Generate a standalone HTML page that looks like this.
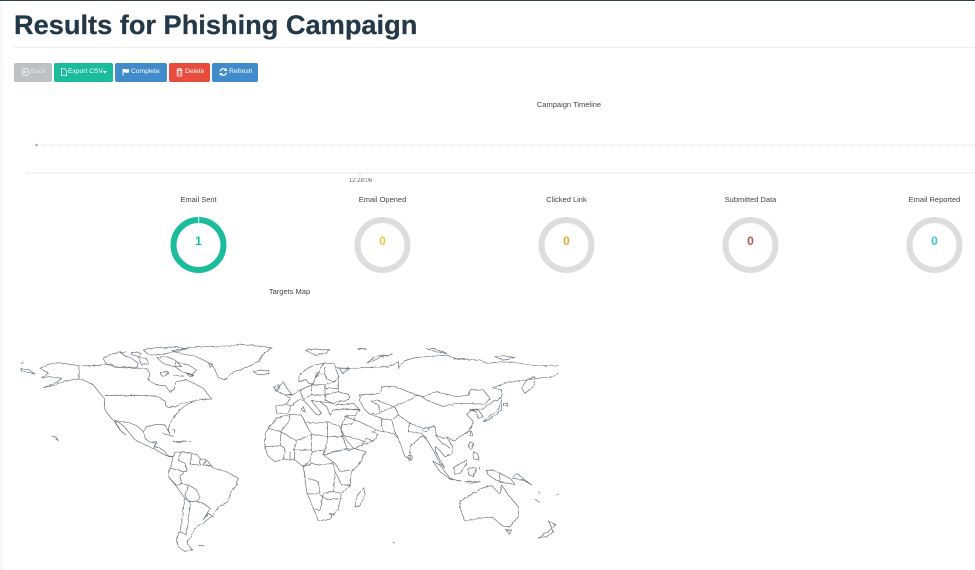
<!DOCTYPE html>
<html><head><meta charset="utf-8">
<style>
html,body{margin:0;padding:0;background:#fff}
body{width:975px;height:570px;position:relative;overflow:hidden;font-family:"Liberation Sans",sans-serif;color:#333}
.bar{position:absolute;left:0;top:0;width:975px;height:1px;background:#2c3e50}
.edge{position:absolute;left:0;top:1px;width:3px;height:569px;background:#f8f8f8}
h1{position:absolute;left:14px;top:8px;margin:0;font-size:27.2px;line-height:34px;font-weight:700;color:#233848;white-space:nowrap;-webkit-text-stroke:.25px #233848;filter:blur(.3px)}
.hr{position:absolute;left:14px;top:47px;width:961px;height:1px;background:#eee}
.btn{position:absolute;top:63px;height:19px;border-radius:2px}
.bt{position:absolute;top:67px;font-size:6.7px;line-height:10px;color:#fff;white-space:nowrap;filter:blur(.25px)}
.t{position:absolute;font-size:7.5px;line-height:10px;color:#444;text-align:center;transform:translateX(-50%);white-space:nowrap;filter:blur(.3px)}
.n{position:absolute;font-size:12px;line-height:14px;font-weight:700;transform:translateX(-50%);top:234px;filter:blur(.3px)}
svg.full{position:absolute;left:0;top:0}
</style></head><body>
<div class="edge"></div><div class="bar"></div>
<h1>Results for Phishing Campaign</h1>
<div class="hr"></div>
<div class="btn" style="left:14px;width:38px;background:#bcc1c4"></div>
<div class="btn" style="left:54px;width:59px;background:#1abc9c"></div>
<div class="btn" style="left:115px;width:52px;background:#428bca"></div>
<div class="btn" style="left:169px;width:41px;background:#e74c3c"></div>
<div class="btn" style="left:212px;width:46px;background:#428bca"></div>
<div class="bt" style="left:31px;color:#e4e6e8">Back</div>
<div class="bt" style="left:68px">Export CSV</div>
<div class="bt" style="left:131px">Complete</div>
<div class="bt" style="left:185px">Delete</div>
<div class="bt" style="left:229px">Refresh</div>

<div class="t" style="left:569px;top:100px">Campaign Timeline</div>
<div class="t" style="left:360.5px;top:176px;font-size:6px;color:#666">12:28:06</div>
<div class="t" style="left:198.5px;top:195px">Email Sent</div>
<div class="t" style="left:382.5px;top:195px">Email Opened</div>
<div class="t" style="left:566.5px;top:195px">Clicked Link</div>
<div class="t" style="left:750.5px;top:195px">Submitted Data</div>
<div class="t" style="left:934.5px;top:195px">Email Reported</div>
<div class="t" style="left:289.5px;top:287px">Targets Map</div>
<div class="n" style="left:198.5px;color:#1abc9c">1</div>
<div class="n" style="left:382.5px;color:#e9c545">0</div>
<div class="n" style="left:566.5px;color:#dfae35">0</div>
<div class="n" style="left:750.5px;color:#b5544c">0</div>
<div class="n" style="left:934.5px;color:#45c0d4">0</div>

<svg class="full" width="975" height="570" viewBox="0 0 975 570">
<defs>
<filter id="w" filterUnits="userSpaceOnUse" x="0" y="320" width="600" height="250">
<feTurbulence type="fractalNoise" baseFrequency=".28" numOctaves="2" seed="4" result="n"/>
<feDisplacementMap in="SourceGraphic" in2="n" scale="2.2" result="d"/>
<feGaussianBlur in="d" stdDeviation=".22"/>
</filter>
</defs>
<!-- button icons -->
<g fill="none" stroke="#fff" stroke-width="1">
<circle cx="25.5" cy="72" r="3.6" stroke="#e8eaeb" stroke-width="1.1"/>
<path d="M27.5 72H24M25.2 70.6L23.7 72 25.2 73.4" stroke="#e8eaeb" stroke-width=".8"/>
<path d="M61.5 68.5H64.5L66.5 70.5V75.5H61.5Z" stroke-width=".8"/>
<path d="M123 69V75.5" /><path d="M123 69.2C125 68.3 126 70 129 69V72.5C126 73.5 125 71.8 123 72.7Z" fill="#fff" stroke="none"/>
<path d="M176.5 70H182.5M178 70V68.6H181V70M177.2 70.5H181.8V76H177.2Z" stroke-width=".8"/>
<path d="M178.7 71.5V75M180.3 71.5V75" stroke-width=".5"/>
<path d="M220 71.3A3.5 3.5 0 0 1 226 70M226.5 72.7A3.5 3.5 0 0 1 220.5 74" stroke-width="1.2"/>
</g>
<path d="M226.8 68V71H223.8ZM219.7 76V73H222.7Z" fill="#fff"/>
<path d="M102.5 71H107L104.7 73.5Z" fill="#fff"/>

<line x1="36" y1="145" x2="975" y2="145" stroke="#d4d4d4" stroke-width="1" stroke-dasharray="1 1"/>
<circle cx="36.5" cy="145" r="1.4" fill="#b0b0b0"/>
<line x1="26" y1="173" x2="975" y2="173" stroke="#e8e8e8"/>
<line x1="360" y1="173" x2="360" y2="177" stroke="#e2e2e2"/>
<circle cx="198.5" cy="245" r="25" fill="none" stroke="#1abc9c" stroke-width="6"/>
<rect x="198.2" y="216" width="1" height="7" fill="#d8f3ec"/>
<g fill="none" stroke="#ddd" stroke-width="6">
<circle cx="382.5" cy="245" r="25"/><circle cx="566.5" cy="245" r="25"/><circle cx="750.5" cy="245" r="25"/><circle cx="934.5" cy="245" r="25"/>
</g>

<g filter="url(#w)" fill="none" stroke="#67747e" stroke-linejoin="round">
<g transform="translate(0,335) scale(.3333)" stroke-width="2.1">
<!-- North America -->
<path d="M120 100L145 88 175 83 237 92 270 93 300 90 335 87 345 97 400 100 440 100 450 115 445 135 470 150 497 152 510 172 525 160 527 140 560 135 590 150 610 160 625 180 635 192 590 195 560 210 540 222 527 240 510 265 505 285 510 298 495 270 470 268 440 275 430 290 435 310 450 322 470 320 465 335 480 340 495 350 505 365 520 365 500 362 480 352 460 340 440 332 405 315 385 290 370 272 345 255 350 268 365 290 378 300 360 285 345 262 330 245 315 225 313 190 300 175 280 150 250 135 237 132 190 140 165 150 130 158 170 142 185 130 150 125 125 128 145 115Z"/>
<path d="M237 92V132M315 182H445L475 185 497 200 500 216 525 215 550 205 575 200M345 258L385 262 410 272 430 290M455 325L470 320M460 340L472 325"/>
<path d="M63 85H73M63 100L85 103 105 117 85 112 63 108ZM155 303L170 307 175 317 165 310M490 295L520 305 505 300ZM516 284H524V295M520 320L560 318 535 322ZM568 320H575M595 632H612"/>
<!-- Arctic -->
<path d="M310 72L330 58 360 52 375 62 395 70 415 85 410 98 380 96 345 95 320 88ZM362 52H380M395 50L425 55 420 65 395 60ZM415 68L440 70 445 85 425 90ZM430 45L465 38 530 36 560 42 515 52 480 60 445 58ZM470 68L500 65 525 75 545 95 520 95 490 85ZM530 80L565 90 590 105 575 120 545 110 525 95ZM480 112L505 110 500 122 485 122ZM520 122H550M560 115L580 120 570 125Z"/>
<!-- Greenland, Iceland -->
<path d="M515 47L590 35 660 35 730 28 815 38 785 60 778 80 755 90 735 100 700 110 675 133 655 128 640 95 630 85 590 65 540 55ZM625 85L640 90 630 97ZM760 110L780 105 808 108 805 116 775 120Z"/>
<!-- South America -->
<path d="M520 365L525 352 545 350 590 358 600 370 620 375 640 400 680 410 715 430 710 450 690 475 685 500 655 515 640 540 615 560 590 575 575 600 560 625 578 645 555 650 535 635 530 610 540 590 548 540 555 490 530 455 505 425 510 400Z"/>
<path d="M545 350L535 375 555 385 560 405 540 425 545 445 565 450 590 465 600 488 590 500 610 505 630 520 610 555M575 358L570 388 600 390 600 370M620 375L608 390 632 392 640 400M510 400L535 405 555 412M505 425L530 452 548 445M565 450L555 480 565 500 590 500M555 490L570 500 565 560 558 600 540 590M610 555L625 535 640 545"/>
</g>

<g transform="translate(270,335) scale(.3333)" stroke-width="2.1">
<!-- Africa -->
<path d="M20 250L60 238 95 240 105 262 150 265 173 260 210 275 225 310 250 340 287 350 270 385 245 410 240 450 215 475 205 520 180 553 145 557 130 520 110 470 100 395 75 375 40 372 15 380 -5 365 -15 340 -15 300 -5 280Z"/>
<path d="M173 260V305H220M125 298L173 305 165 345 125 350 125 298 80 318 32 290 -5 280M105 262L125 298M60 238L55 262 32 290 32 332 -15 335M125 350L122 375 100 395M80 318L72 345 125 345M165 345L160 360 215 345 250 340M160 360L195 385 210 410 240 405M100 395L125 385 145 390 190 385 195 410 190 470 160 475 150 525 130 522M115 430L145 440 150 475 110 478M195 410L215 450 240 450M190 470L215 475M75 345L72 375M45 340L40 372M32 332L45 340M60 350V378M150 480L175 495 205 490M180 535H190V540H180Z"/>
<path d="M255 515L262 480 282 458 284 480 272 512Z"/>
<!-- Eurasia coast -->
<path d="M85 195L62 212 55 235 20 235 18 212 45 208 62 190 45 180 72 178 90 165 125 150 140 150 165 148 195 140 170 132 165 118 150 115 135 130 130 148 115 145 110 135 88 140 85 125 100 110 125 92 160 85 192 85 198 98 240 100 218 115 208 102 255 100 300 97 360 95 385 80 385 100 395 85 420 70 470 65 530 60 560 72 630 75 650 85 720 80 790 92 865 92"/>
<path d="M865 115L850 125 800 130 770 135 720 140 668 158 695 165 695 188 660 205 640 222 605 225 590 238 610 260 600 285 570 305 550 318 530 305 548 335 545 358 525 365 508 345 497 335 497 350 510 375 525 400 510 385 495 355 480 330 468 310 455 303 420 335 420 372 405 365 385 310 370 295 340 290 320 285 305 290 325 298 310 318 270 332 235 348 215 300 215 270 225 245 255 240 270 225 230 222 190 225 180 240 170 215 150 200 125 198 155 235 140 240 110 205 100 195 85 195"/>
<!-- Europe borders -->
<path d="M45 208L62 212M90 165L100 192M125 150V180M165 148V180M100 192L125 180H165V195L190 205 205 200 235 195 238 180 205 170 165 180M150 200L190 205M195 210L250 205 270 225 225 222M195 98L205 120 195 140M160 85L135 130M165 95V118M165 160H205M205 120L205 170"/>
<path d="M15 165L28 155 40 140 50 160 65 178 40 178ZM12 158L25 148 30 158 18 168ZM100 215L105 230 95 225Z"/>
<!-- Asia borders -->
<path d="M270 180L330 175 335 155 375 155 440 180 460 185 500 170 560 185 595 180 600 165 640 165 660 190 645 208 600 205 560 205 520 215 470 195 455 185M270 180L268 195 285 225 300 238 330 235 325 210 305 200 320 195 370 215 420 195 445 180M300 238L335 250 335 270 340 290M335 250L365 255 385 240 375 215 345 225 330 235M385 240L420 265 460 280 495 275 500 305 520 330M365 255L375 290 385 310M420 265L415 290 455 295 470 310M455 285L470 290 480 275M495 300L520 310 535 305M520 325L540 340M225 245L255 255 300 275 320 285M215 270L250 265 255 245M270 332L290 310 310 318M215 300L290 320"/>
<!-- Arctic Eurasia -->
<path d="M105 45L135 42 180 45 170 53 135 60ZM262 42H290M470 42L490 40 530 55 500 50ZM675 65L700 62 735 68 700 75ZM290 85L315 65 368 58 335 65 305 80ZM550 72L585 70"/>
<!-- East Asia islands -->
<path d="M795 125L770 135 755 160 765 175 790 155ZM600 225L625 225 640 245 625 250 618 230ZM640 260L665 240 685 225 695 195 695 225 670 245 645 260ZM700 205H712V212H700ZM600 290H606V303H600ZM600 320L610 325 605 345 595 335ZM610 350L625 358 625 375 610 370ZM415 362H425V375H415Z"/>
<!-- Indonesia, PNG -->
<path d="M488 378L510 390 540 430 575 438 540 432 510 410ZM550 398L590 375 590 385 570 415 555 418ZM595 400L620 398 610 425 595 418ZM585 440L630 440 600 445ZM630 395V405M650 408L665 405 690 415 720 430 735 448 690 440 670 430 655 420ZM690 412V442M740 415L785 450 760 435 725 430ZM805 470L810 475M795 492L808 502M855 482L865 475M368 622H376"/>
<!-- Australia, NZ -->
<path d="M570 500L605 478 640 458 665 452 690 478 695 450 715 480 745 515 745 545 720 575 700 575 665 545 630 550 585 558 570 520ZM708 585H725L718 597ZM805 608L835 590 850 575 858 570 835 558 850 590 830 605Z"/>
</g>
</g>
</svg>
</body></html>
